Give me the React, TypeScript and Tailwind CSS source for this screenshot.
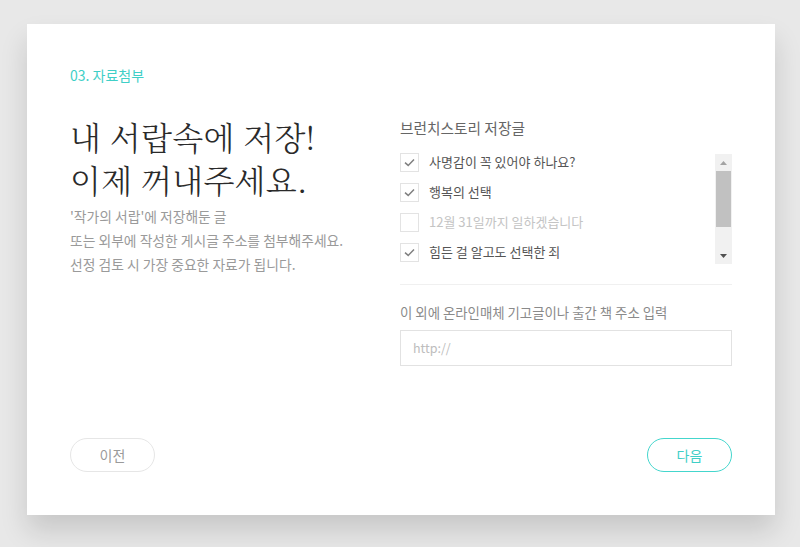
import React from "react";

const items = [
  { label: "사명감이 꼭 있어야 하나요?", checked: true },
  { label: "행복의 선택", checked: true },
  { label: "12월 31일까지 일하겠습니다", checked: false },
  { label: "힘든 걸 알고도 선택한 죄", checked: true },
];

function Check() {
  return (
    <svg width="11" height="9" viewBox="0 0 11 9" fill="none">
      <path d="M1 4.6 L4.2 7.4 L10 1.4" stroke="#808080" strokeWidth="1.5" />
    </svg>
  );
}

export default function App() {
  return (
    <div
      className="w-[800px] h-[547px] bg-[#e8e8e8] pt-[24px] pl-[27px]"
      style={{ fontFamily: '"Noto Sans CJK KR", "Noto Sans", sans-serif' }}
    >
      <div className="w-[748px] h-[491px] bg-white shadow-[0_16px_26px_rgba(0,0,0,0.14)] flex flex-col px-[43px] pt-[41px] pb-[43px]">
        <div className="text-[14px] leading-[20px] text-[#3fcfc7]">03. 자료첨부</div>

        <div className="flex mt-[30px]">
          <div className="w-[330px]">
            <h1
              className="text-[32px] leading-[43px] text-[#2a2a2a] font-light tracking-[0.3px]"
              style={{ fontFamily: '"Noto Serif CJK KR", "Noto Sans CJK KR", serif' }}
            >
              내 서랍속에 저장!
              <br />
              이제 꺼내주세요.
            </h1>
            <p className="mt-[3px] text-[13.8px] leading-[24px] text-[#9a9a9a]">
              '작가의 서랍'에 저장해둔 글
              <br />
              또는 외부에 작성한 게시글 주소를 첨부해주세요.
              <br />
              선정 검토 시 가장 중요한 자료가 됩니다.
            </p>
          </div>

          <div className="ml-auto w-[332px] mt-[3px]">
            <div className="text-[14.7px] leading-[20px] text-[#666]">브런치스토리 저장글</div>
            <div className="flex mt-[9px]">
              <div className="flex-1 h-[120px] overflow-hidden">
                {items.map((it) => (
                  <div key={it.label} className="h-[30px] flex items-center gap-[10px]">
                    <span className="w-[19px] h-[19px] border border-[#e3e3e3] flex items-center justify-center bg-white">
                      {it.checked && <Check />}
                    </span>
                    <span
                      className={
                        "text-[13px] " + (it.checked ? "text-[#555]" : "text-[#c4c4c4]")
                      }
                    >
                      {it.label}
                    </span>
                  </div>
                ))}
              </div>
              <div className="w-[17px] h-[110px] mt-[7px] bg-[#f1f1f1] flex flex-col items-center">
                <div className="h-[17px] flex items-center justify-center">
                  <svg width="7" height="4" viewBox="0 0 7 4">
                    <path d="M3.5 0 L7 4 L0 4 Z" fill="#a3a3a3" />
                  </svg>
                </div>
                <div className="w-[15px] h-[56px] bg-[#c1c1c1]" />
                <div className="mt-auto h-[17px] flex items-center justify-center">
                  <svg width="7" height="4" viewBox="0 0 7 4">
                    <path d="M0 0 L7 0 L3.5 4 Z" fill="#505050" />
                  </svg>
                </div>
              </div>
            </div>
            <div className="mt-[17px] border-t border-[#f0f0f0]" />
            <div className="mt-[17px] text-[13.4px] leading-[20px] text-[#8a8a8a]">
              이 외에 온라인매체 기고글이나 출간 책 주소 입력
            </div>
            <div className="mt-[8px] h-[36px] border border-[#e2e2e2] flex items-center px-[12px] text-[12.5px] text-[#bdbdbd]">
              http://
            </div>
          </div>
        </div>

        <div className="mt-auto flex justify-between">
          <button className="w-[85px] h-[34px] rounded-full border border-[#e6e6e6] text-[14px] text-[#9a9a9a] bg-white">
            이전
          </button>
          <button className="w-[85px] h-[34px] rounded-full border border-[#44d6cd] text-[14px] text-[#3fcfc7] bg-white">
            다음
          </button>
        </div>
      </div>
    </div>
  );
}
